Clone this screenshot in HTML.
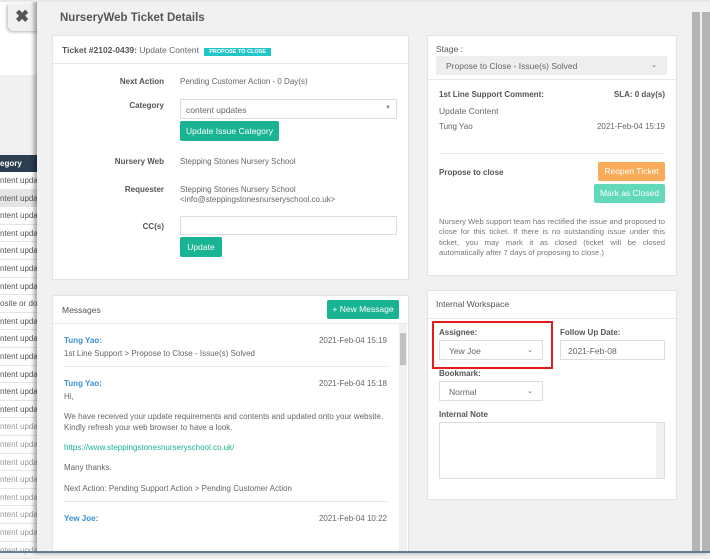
<!DOCTYPE html><html><head><style>
*{box-sizing:border-box;margin:0;padding:0}
body{width:710px;height:553px;overflow:hidden;background:#f1f1f1;font-family:"Liberation Sans",sans-serif;font-size:8px;color:#666;position:relative}
.abs{position:absolute}
.bgl{left:0;top:0;width:37px;height:553px;background:#fff}
.row{position:absolute;left:0;width:37px;height:17.6px;border-bottom:1px solid #e6e6e6;font-size:8px;line-height:17px;white-space:nowrap;overflow:hidden;color:#555}
.panel{left:37px;top:0;width:673px;height:553px;background:#f1f1f1;box-shadow:-3px 0 4px rgba(0,0,0,.35)}
.card{position:absolute;background:#fff;border:1px solid #e3e3e3}
.lbl{position:absolute;font-weight:bold;color:#555;text-align:right;width:110px}
.btn{position:absolute;background:#1ab394;color:#fff;border-radius:2px;font-size:8.5px;text-align:center}
.inp{position:absolute;border:1px solid #ddd;background:#fff}
.b{font-weight:bold;color:#555}
</style></head><body>
<div class="abs bgl"></div>
<div class="abs" style="left:0;top:75px;width:37px;height:80px;background:#f0f0f0"></div>
<div class="abs" style="left:0;top:155px;width:37px;height:17px;background:#2c3e50;color:#fff;font-weight:bold;line-height:17px">egory</div>
<div class="row" style="top:172px">ntent updat</div>
<div class="row" style="top:189.6px;background:#e5e5e5">ntent updat</div>
<div class="row" style="top:207.2px">ntent updat</div>
<div class="row" style="top:224.8px">ntent updat</div>
<div class="row" style="top:242.4px">ntent updat</div>
<div class="row" style="top:260px">ntent updat</div>
<div class="row" style="top:277.6px">ntent updat</div>
<div class="row" style="top:295.2px">osite or do</div>
<div class="row" style="top:312.8px">ntent updat</div>
<div class="row" style="top:330.4px">ntent updat</div>
<div class="row" style="top:348px">ntent updat</div>
<div class="row" style="top:365.6px">ntent updat</div>
<div class="row" style="top:383.2px">ntent updat</div>
<div class="row" style="top:400.8px">ntent updat</div>
<div class="row" style="top:418.4px;color:#999">ntent updat</div>
<div class="row" style="top:436px;color:#999">ntent updat</div>
<div class="row" style="top:453.6px;color:#999">ntent updat</div>
<div class="row" style="top:471.2px;color:#999">ntent updat</div>
<div class="row" style="top:488.8px;color:#999">ntent updat</div>
<div class="row" style="top:506.4px;color:#999">ntent updat</div>
<div class="row" style="top:524px;color:#999">ntent updat</div>
<div class="row" style="top:541.6px;color:#999">ntent updat</div>
<div class="abs" style="left:8px;top:4px;width:32px;height:27px;background:#f1f1f1;border-radius:0 0 0 5px;box-shadow:-1px 1px 3px rgba(0,0,0,.3)"></div>
<div class="abs" style="left:15px;top:7px;font-size:17px;font-weight:bold;color:#555">✖</div>
<div class="abs panel"></div>
<div class="abs" style="left:60px;top:12px;font-size:11.5px;font-weight:bold;color:#555">NurseryWeb Ticket Details</div>
<div class="abs" style="left:0;top:0;width:710px;height:2px;background:#e8e8e8"></div>

<div class="card" style="left:52px;top:35px;width:357px;height:245px">
 <div style="height:28px;border-bottom:1px solid #e7e7e7;padding:9px 0 0 9px;font-size:8.5px"><span class="b">Ticket #2102-0439:</span> Update Content <span style="background:#23c6c8;color:#fff;font-size:5.5px;font-weight:bold;padding:1px 5px;margin-left:3px">PROPOSE TO CLOSE</span></div>
</div>
<div class="lbl" style="left:54px;top:77px">Next Action</div>
<div class="abs" style="left:180px;top:77px">Pending Customer Action - 0 Day(s)</div>
<div class="lbl" style="left:54px;top:101px">Category</div>
<div class="inp" style="left:180px;top:99px;width:217px;height:20px;padding:5px 5px;font-size:8.5px">content updates<span style="float:right;font-size:6px;color:#888">▼</span></div>
<div class="btn" style="left:180px;top:121px;width:99px;height:20px;line-height:20px">Update Issue Category</div>
<div class="lbl" style="left:54px;top:157px">Nursery Web</div>
<div class="abs" style="left:180px;top:157px">Stepping Stones Nursery School</div>
<div class="lbl" style="left:54px;top:185px">Requester</div>
<div class="abs" style="left:180px;top:185px;line-height:10px">Stepping Stones Nursery School<br>&lt;info@steppingstonesnurseryschool.co.uk&gt;</div>
<div class="lbl" style="left:54px;top:222px">CC(s)</div>
<div class="inp" style="left:180px;top:216px;width:217px;height:19px"></div>
<div class="btn" style="left:180px;top:237px;width:42px;height:20px;line-height:20px">Update</div>

<div class="card" style="left:52px;top:295px;width:357px;height:258px;border-bottom:none">
 <div style="height:28px;border-bottom:1px solid #e7e7e7;padding:9px 0 0 9px;font-size:8.5px;color:#555">Messages</div>
</div>
<div class="btn" style="left:327px;top:300px;width:72px;height:19px;line-height:19px">+ New Message</div>
<div class="abs" style="left:399px;top:324px;width:8px;height:229px;background:#f1f1f1"></div>
<div class="abs" style="left:400px;top:333px;width:6px;height:32px;background:#c1c1c1"></div>
<div class="abs b" style="left:64px;top:336px;color:#3a8fd0">Tung Yao:</div>
<div class="abs" style="right:323px;top:336px">2021-Feb-04 15:19</div>
<div class="abs" style="left:64px;top:349px">1st Line Support &gt; Propose to Close - Issue(s) Solved</div>
<div class="abs" style="left:64px;top:366px;width:323px;border-top:1px solid #e7e7e7"></div>
<div class="abs b" style="left:64px;top:379px;color:#3a8fd0">Tung Yao:</div>
<div class="abs" style="right:323px;top:379px">2021-Feb-04 15:18</div>
<div class="abs" style="left:64px;top:392px">Hi,</div>
<div class="abs" style="left:64px;top:412px;line-height:10.5px">We have received your update requirements and contents and updated onto your website.<br>Kindly refresh your web browser to have a look.</div>
<div class="abs" style="left:64px;top:443px;color:#1ab394">https://www.steppingstonesnurseryschool.co.uk/</div>
<div class="abs" style="left:64px;top:463px">Many thanks.</div>
<div class="abs" style="left:64px;top:484px">Next Action: Pending Support Action &gt; Pending Customer Action</div>
<div class="abs" style="left:64px;top:501px;width:323px;border-top:1px solid #e7e7e7"></div>
<div class="abs b" style="left:64px;top:514px;color:#3a8fd0">Yew Joe:</div>
<div class="abs" style="right:323px;top:514px">2021-Feb-04 10:22</div>

<div class="card" style="left:427px;top:35px;width:250px;height:241px"></div>
<div class="abs" style="left:436px;top:44px;font-size:8.5px;color:#555">Stage :</div>
<div class="abs" style="left:436px;top:56px;width:231px;height:19px;background:#eee;padding:5px 10px;font-size:8.5px">Propose to Close - Issue(s) Solved<span style="float:right;font-size:7px">⌄</span></div>
<div class="abs" style="left:428px;top:79px;width:248px;border-top:1px solid #e7e7e7"></div>
<div class="abs b" style="left:439px;top:90px">1st Line Support Comment:</div>
<div class="abs b" style="right:45px;top:90px">SLA: 0 day(s)</div>
<div class="abs" style="left:439px;top:106px;font-size:8.5px">Update Content</div>
<div class="abs" style="left:439px;top:122px">Tung Yao</div>
<div class="abs" style="right:45px;top:122px">2021-Feb-04 15:19</div>
<div class="abs" style="left:439px;top:153px;width:226px;border-top:1px solid #e7e7e7"></div>
<div class="abs b" style="left:439px;top:168px">Propose to close</div>
<div class="btn" style="left:598px;top:162px;width:67px;height:19px;line-height:19px;background:#f8ac59">Reopen Ticket</div>
<div class="btn" style="left:594px;top:184px;width:71px;height:19px;line-height:19px;background:#62d9bb">Mark as Closed</div>
<div class="abs" style="left:439px;top:217px;width:226px;line-height:10.3px;text-align:justify;color:#777;font-size:7.7px">Nursery Web support team has rectified the issue and proposed to close for this ticket. If there is no outstanding issue under this ticket, you may mark it as closed (ticket will be closed automatically after 7 days of proposing to close.)</div>

<div class="card" style="left:427px;top:290px;width:250px;height:210px"></div>
<div class="abs" style="left:436px;top:299px;font-size:8.5px;color:#555">Internal Workspace</div>
<div class="abs" style="left:428px;top:318px;width:248px;border-top:1px solid #e7e7e7"></div>
<div class="abs" style="left:432px;top:321px;width:121px;height:48px;border:2px solid #e31b1b"></div>
<div class="abs b" style="left:439px;top:328px">Assignee:</div>
<div class="inp" style="left:439px;top:340px;width:104px;height:20px;padding:5px 9px;font-size:8.5px">Yew Joe<span style="float:right;font-size:7px">⌄</span></div>
<div class="abs b" style="left:560px;top:328px">Follow Up Date:</div>
<div class="inp" style="left:560px;top:340px;width:105px;height:20px;padding:5px 7px;font-size:8.5px">2021-Feb-08</div>
<div class="abs b" style="left:439px;top:369px">Bookmark:</div>
<div class="inp" style="left:439px;top:381px;width:104px;height:20px;padding:5px 9px;font-size:8.5px">Normal<span style="float:right;font-size:7px">⌄</span></div>
<div class="abs b" style="left:439px;top:410px">Internal Note</div>
<div class="inp" style="left:439px;top:422px;width:226px;height:57px"><div style="position:absolute;right:0;top:0;width:8px;height:55px;background:#f1f1f1"></div></div>

<div class="abs" style="left:692px;top:12px;width:8px;height:541px;background:#b5b5b5"></div>
<div class="abs" style="left:702px;top:12px;width:8px;height:541px;background:#b5b5b5"></div>
<div class="abs" style="left:0;top:551px;width:710px;height:2px;background:#6b7b88"></div>
</body></html>
